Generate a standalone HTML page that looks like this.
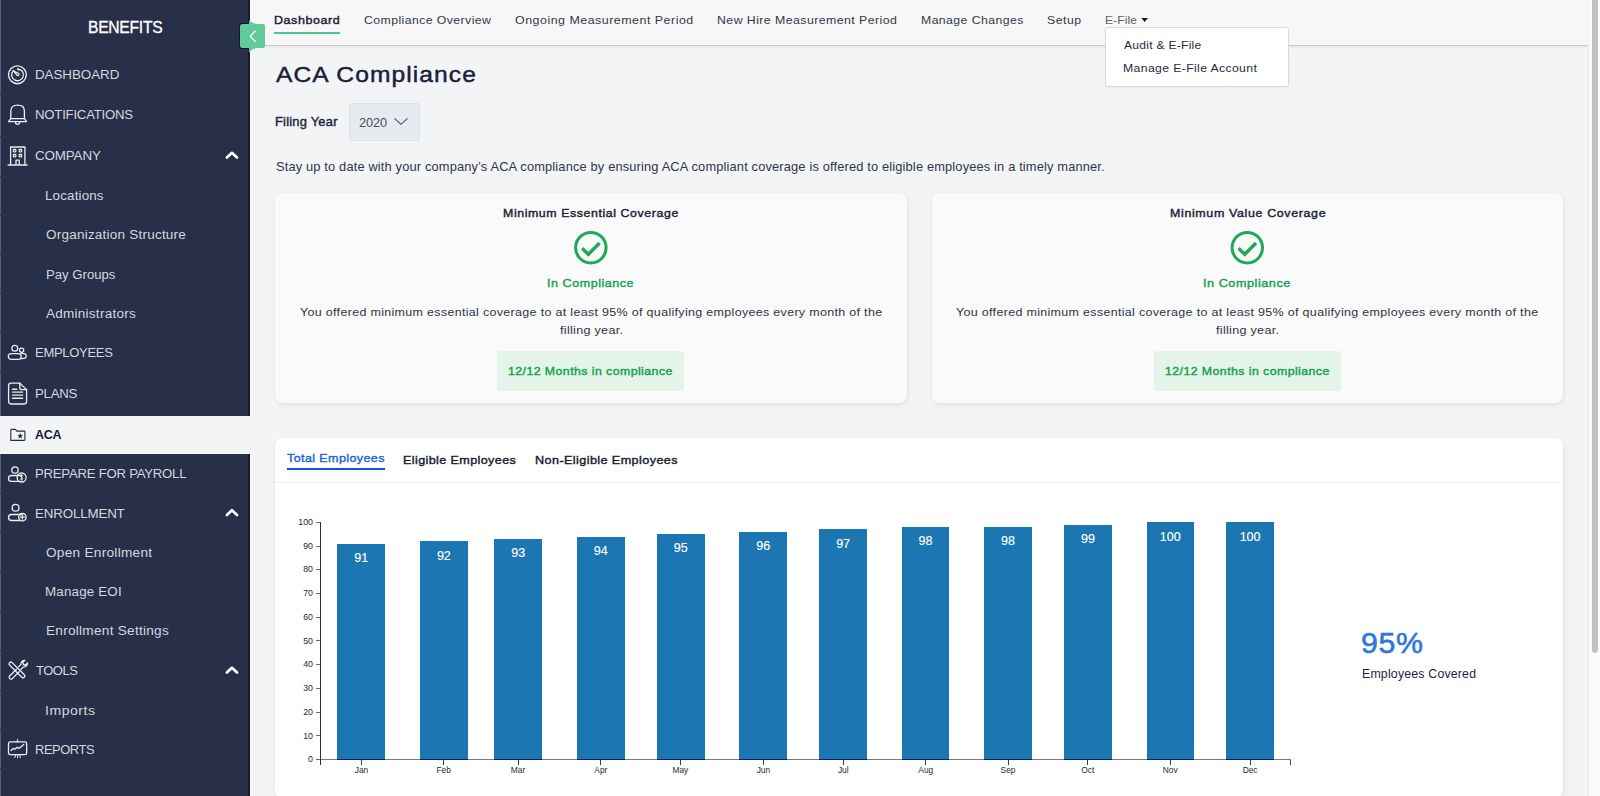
<!DOCTYPE html>
<html><head><meta charset="utf-8"><title>ACA Compliance</title>
<style>
html,body{margin:0;padding:0;}
body{width:1600px;height:796px;overflow:hidden;position:relative;background:#f3f4f6;font-family:"Liberation Sans", sans-serif;}
.t{position:absolute;white-space:pre;font-family:"Liberation Sans", sans-serif;}
.abs{position:absolute;}
#sb{position:absolute;left:0;top:0;width:248px;height:796px;background:#282f49;}
#sbr{position:absolute;left:248px;top:0;width:2px;height:796px;background:#171b2c;}
#sbl{position:absolute;left:0;top:0;width:1px;height:796px;background:#585e74;}
.sep{position:absolute;left:0;width:248px;height:1px;background:#333338;}
#aca{position:absolute;left:0;top:416px;width:250px;height:38px;background:#f3f4f6;}
#nav{position:absolute;left:250px;top:0;width:1338px;height:45px;background:#f7f7f7;border-bottom:1px solid #c9c9ca;box-shadow:0 1px 2px rgba(0,0,0,0.07);}
#navu{position:absolute;left:274px;top:32px;width:66px;height:2px;background:#4cc68f;}
#mainr{position:absolute;left:1588px;top:46px;width:1px;height:750px;background:#e9e9ea;}
#track{position:absolute;left:1589px;top:0;width:12px;height:796px;background:#fbfbfb;}
#thumb{position:absolute;left:1592px;top:0;width:6px;height:653px;background:#c2c2c2;border-radius:0 0 3px 3px;}
#dd{position:absolute;left:1105px;top:27px;width:182px;height:58px;background:#fff;border:1px solid #d9d9dc;border-radius:3px;box-shadow:0 1px 2px rgba(0,0,0,0.04);}
#sel{position:absolute;left:349px;top:103px;width:69px;height:36px;background:#e7eaee;border:1px solid #dae1e9;border-radius:3px;}
.card{position:absolute;top:193px;height:210px;background:#fafafa;border-radius:8px;box-shadow:1px 2px 5px rgba(20,30,50,0.09);}
.btn{position:absolute;top:351px;width:187px;height:40px;background:#e4f4e9;border-radius:3px;}
#cc{position:absolute;left:275px;top:438px;width:1288px;height:360px;background:#ffffff;border-radius:8px;box-shadow:1px 2px 5px rgba(20,30,50,0.09);}
#ccd{position:absolute;left:275px;top:482px;width:1288px;height:1px;background:#eceef1;}
#tabu{position:absolute;left:287px;top:467.8px;width:98px;height:2.2px;background:#0d55d9;}
.bar{position:absolute;background:#1c76b1;border-bottom:1px solid #0c1f6a;box-sizing:border-box;}
.yt{position:absolute;left:315.5px;width:5px;height:1px;background:#6a6a6a;}
.xt{position:absolute;top:759.6px;width:1px;height:5px;background:#3a3a3a;}
#yax{position:absolute;left:320px;top:522px;width:1px;height:242.5px;background:#2e2e2e;}
#xax{position:absolute;left:320px;top:759.1px;width:970.5px;height:1px;background:#7a7a7a;}
#xend{position:absolute;left:1289.5px;top:759.6px;width:1px;height:5px;background:#444;}
</style></head><body>
<div id="sb"></div><div id="sbl"></div><div id="sbr"></div>
<div class="sep" style="top:94px"></div>
<div class="sep" style="top:136px"></div>
<div class="sep" style="top:176px"></div>
<div class="sep" style="top:215px"></div>
<div class="sep" style="top:254px"></div>
<div class="sep" style="top:293px"></div>
<div class="sep" style="top:332px"></div>
<div class="sep" style="top:372px"></div>
<div class="sep" style="top:493px"></div>
<div class="sep" style="top:532px"></div>
<div class="sep" style="top:572px"></div>
<div class="sep" style="top:611px"></div>
<div class="sep" style="top:650px"></div>
<div class="sep" style="top:690px"></div>
<div class="sep" style="top:729px"></div>
<div class="sep" style="top:768px"></div>
<div id="aca"></div>
<div id="nav"></div>
<div id="navu"></div>
<div id="mainr"></div><div id="track"></div><div id="thumb"></div>
<div id="sel"></div>
<div class="card" style="left:275px;width:632px"></div>
<div class="card" style="left:932px;width:631px"></div>
<div class="btn" style="left:497px"></div>
<div class="btn" style="left:1154px"></div>
<div id="cc"></div><div id="ccd"></div><div id="tabu"></div>
<div id="xax"></div>
<div class="bar" style="left:337.40px;top:543.66px;width:47.8px;height:216.34px"></div>
<div class="bar" style="left:419.91px;top:541.28px;width:47.8px;height:218.72px"></div>
<div class="bar" style="left:494.44px;top:538.91px;width:47.8px;height:221.09px"></div>
<div class="bar" style="left:576.95px;top:536.54px;width:47.8px;height:223.46px"></div>
<div class="bar" style="left:656.80px;top:534.16px;width:47.8px;height:225.84px"></div>
<div class="bar" style="left:739.31px;top:531.79px;width:47.8px;height:228.21px"></div>
<div class="bar" style="left:819.16px;top:529.42px;width:47.8px;height:230.58px"></div>
<div class="bar" style="left:901.68px;top:527.05px;width:47.8px;height:232.95px"></div>
<div class="bar" style="left:984.19px;top:527.05px;width:47.8px;height:232.95px"></div>
<div class="bar" style="left:1064.04px;top:524.67px;width:47.8px;height:235.33px"></div>
<div class="bar" style="left:1146.55px;top:522.30px;width:47.8px;height:237.70px"></div>
<div class="bar" style="left:1226.40px;top:522.30px;width:47.8px;height:237.70px"></div>
<div class="yt" style="top:759.10px"></div>
<div class="yt" style="top:735.37px"></div>
<div class="yt" style="top:711.64px"></div>
<div class="yt" style="top:687.91px"></div>
<div class="yt" style="top:664.18px"></div>
<div class="yt" style="top:640.45px"></div>
<div class="yt" style="top:616.72px"></div>
<div class="yt" style="top:592.99px"></div>
<div class="yt" style="top:569.26px"></div>
<div class="yt" style="top:545.53px"></div>
<div class="yt" style="top:521.80px"></div>
<div class="xt" style="left:360.80px"></div>
<div class="xt" style="left:443.31px"></div>
<div class="xt" style="left:517.84px"></div>
<div class="xt" style="left:600.35px"></div>
<div class="xt" style="left:680.20px"></div>
<div class="xt" style="left:762.71px"></div>
<div class="xt" style="left:842.56px"></div>
<div class="xt" style="left:925.08px"></div>
<div class="xt" style="left:1007.59px"></div>
<div class="xt" style="left:1087.44px"></div>
<div class="xt" style="left:1169.95px"></div>
<div class="xt" style="left:1249.80px"></div>
<div id="yax"></div><div id="xend"></div>
<svg class="abs" style="left:0;top:0" width="1600" height="796" viewBox="0 0 1600 796">
<!-- toggle -->
<rect x="239" y="23" width="12" height="26" rx="3" fill="#120f28" opacity="0.85"/>
<path d="M249 20 Q251 23 257 24 L263 24 Q265 24 265 26 L265 46 Q265 48 263 48 L257 48 Q251 49 249 53 Z" fill="#61ca9b"/>
<rect x="240" y="24" width="14" height="24" rx="2.5" fill="#61ca9b"/>
<path d="M255.6 30.6 L250.2 36.2 L255.6 41.8" fill="none" stroke="#fff" stroke-width="1.3"/>
<!-- chevrons up -->
<g fill="none" stroke="#fff" stroke-width="2.7" stroke-linecap="round" stroke-linejoin="round">
<path d="M226.9 157.6 L231.95 152.8 L237 157.6"/>
<path d="M226.9 515.0 L231.95 510.2 L237 515.0"/>
<path d="M226.9 672.6 L231.95 667.8 L237 672.6"/>
</g>
<!-- E-File caret -->
<path d="M1141.3 18.1 L1148 18.1 L1144.65 21.9 Z" fill="#141933"/>
<!-- select chevron -->
<path d="M394.5 118.3 L401 124.3 L407.5 118.3" fill="none" stroke="#4b5060" stroke-width="1.1"/>
<!-- check icons -->
<g fill="none" stroke="#20a85a">
<circle cx="590.85" cy="247.7" r="15.25" stroke-width="3.0"/>
<path d="M582.1 248.3 L588.3 254.3 L599.6 243.0" stroke-width="3.4"/>
<circle cx="1247.3" cy="247.7" r="15.25" stroke-width="3.0"/>
<path d="M1238.55 248.3 L1244.75 254.3 L1256.05 243.0" stroke-width="3.4"/>
</g>
<!-- sidebar icons -->
<g fill="none" stroke="#eceef2" stroke-width="1.3" stroke-linecap="round" stroke-linejoin="round">
<!-- dashboard 4,60 -->
<g transform="translate(4,60)">
<circle cx="13.4" cy="14.8" r="8.9" stroke-width="1.4"/>
<path d="M13.6 8.9 A5.9 5.9 0 1 1 9.4 10.6" stroke-width="1.3"/>
<path d="M13.6 8.9 Q15.2 9.4 14.8 10.6" stroke-width="1.1"/>
<path d="M9.2 10.6 L13.3 15.5 A1.3 1.3 0 0 0 15 13.8 Z" stroke-width="1.2"/>
</g>
<!-- bell 4,100 -->
<g transform="translate(4,100)">
<path d="M6.8 18.6 L6.8 11 Q6.8 5.2 13.6 5.2 Q20.4 5.2 20.4 11 L20.4 18.6"/>
<path d="M6.8 18.6 L20.4 18.6 L22.6 21.6 L4.6 21.6 Z"/>
<path d="M11.5 22.2 A2.1 2.1 0 0 0 15.7 22.2"/>
</g>
<!-- building 4,142 -->
<g transform="translate(4,142)">
<path d="M6.6 22.3 L6.6 5 L20.9 5 L20.9 22.3"/>
<path d="M4.2 22.9 L23 22.9" stroke-width="1.5"/>
<rect x="9.4" y="7.4" width="2.4" height="2.4" rx="0.5"/>
<rect x="15.2" y="7.4" width="2.4" height="2.4" rx="0.5"/>
<rect x="9.4" y="12.4" width="2.4" height="2.4" rx="0.5"/>
<rect x="15.2" y="12.4" width="2.4" height="2.4" rx="0.5"/>
<path d="M12 22.3 L12 18.2 L15.2 18.2 L15.2 22.3"/>
</g>
<!-- employees 4,338 -->
<g transform="translate(4,338)">
<circle cx="10.8" cy="10.2" r="2.9"/>
<rect x="4.3" y="15.6" width="12.9" height="5.8" rx="2.9"/>
<circle cx="17.6" cy="12.3" r="2.1"/>
<path d="M16.9 15.4 L19.8 15.6 A2.4 2.4 0 0 1 19.8 20.4 L17.6 20.6"/>
</g>
<!-- plans 4,379 -->
<g transform="translate(4,379)">
<path d="M15.8 4.2 L7 4.2 Q4.6 4.2 4.6 6.6 L4.6 22.6 Q4.6 25 7 25 L20.2 25 Q22.6 25 22.6 22.6 L22.6 10.6 Z"/>
<path d="M15.8 4.2 L15.8 8.4 Q15.8 10.6 18 10.6 L22.6 10.6"/>
<path d="M8.5 10.2 L12.7 10.2 M8.5 13.1 L18.6 13.1 M8.5 16.1 L18.6 16.1 M8.5 19.2 L18.6 19.2" stroke-width="1.4"/>
</g>
<!-- prepare payroll 4,460 -->
<g transform="translate(4,460)">
<circle cx="11" cy="10" r="3.2"/>
<path d="M15.6 21.3 L7.4 21.3 A2.9 2.9 0 0 1 7.4 15.5 L17.8 15.5"/>
<circle cx="17.6" cy="17.5" r="4.5"/>
<path d="M18.8 15.8 Q17.6 15.2 16.8 16 Q16.4 17.1 17.7 17.6 Q19 18.1 18.4 19.2 Q17.6 19.8 16.5 19.2 M17.6 14.6 L17.6 20.4" stroke-width="0.9"/>
</g>
<!-- enrollment 4,499 -->
<g transform="translate(4,499)">
<circle cx="11.6" cy="8.8" r="3.4"/>
<path d="M15.6 21.5 L7.5 21.5 A3 3 0 0 1 7.5 15.5 L17.8 15.5"/>
<circle cx="18.4" cy="18.2" r="3.7"/>
<path d="M18.4 16.3 L18.4 20.1 M16.5 18.2 L20.3 18.2" stroke-width="1.2"/>
</g>
<!-- tools 4,657 -->
<g transform="translate(4,657)">
<path d="M5.6 8.1 A1.7 1.7 0 0 1 8.1 5.6 L20.8 18.3 A2.1 2.1 0 0 1 18.3 20.8 Z"/>
<path d="M16.8 12.5 L19.5 9.9 A3.6 3.6 0 0 0 23.5 6 L21.5 8 L19.4 7.5 L18.9 5.4 L20.9 3.4 A3.6 3.6 0 0 0 17 7.4 L14.5 9.9"/>
<path d="M12.5 12.2 L5.4 19.3 A1.9 1.9 0 0 0 8 21.9 L15.1 14.8"/>
</g>
<!-- reports 4,735 -->
<g transform="translate(4,735)">
<rect x="4.5" y="6.9" width="18.2" height="12.8" rx="1.8"/>
<path d="M13.5 6.9 L13.5 4.8"/>
<path d="M7.2 15.5 L9.2 13.4 L10.8 14.3 L13.2 12.2 L14.8 13.4 L19.8 9.4"/>
<path d="M13.6 19.8 L13.6 22.8 M11.6 19.8 L10.8 22.6 M15.6 19.8 L16.4 22.6" stroke-width="1.0"/>
</g>
</g>
<!-- ACA folder icon 4,421 dark -->
<g transform="translate(4,421)" fill="none" stroke="#232a44" stroke-width="1.1" stroke-linejoin="round">
<path d="M6.8 19.4 L6.8 9.3 Q6.8 8.4 7.7 8.4 L11.4 8.4 L12.9 10.1 L20.2 10.1 Q20.9 10.1 20.9 10.8 L20.9 18.8 Q20.9 19.4 20.2 19.4 Z"/>
<path d="M16.2 12.6 L16.8 14.3 L18.5 14.3 L17.2 15.4 L17.6 17.1 L16.2 16.1 L14.8 17.1 L15.2 15.4 L13.9 14.3 L15.6 14.3 Z" fill="#1c2340" stroke-width="0.5"/>
</g>
</svg>

<div id="dd"></div>
<span class="t" style="left:87.93px;top:19.19px;font-size:16.07px;line-height:16.07px;color:#ffffff;-webkit-text-stroke:0.32px #ffffff;letter-spacing:-0.283px;transform:scaleX(0.9748);transform-origin:0 0;">BENEFITS</span>
<span class="t" style="left:34.61px;top:68.06px;font-size:13.51px;line-height:13.51px;color:#d5d8df;letter-spacing:-0.072px;transform:scaleX(0.9932);transform-origin:0 0;">DASHBOARD</span>
<span class="t" style="left:34.93px;top:108.06px;font-size:13.51px;line-height:13.51px;color:#d5d8df;letter-spacing:-0.219px;transform:scaleX(0.9748);transform-origin:0 0;">NOTIFICATIONS</span>
<span class="t" style="left:34.81px;top:148.71px;font-size:13.51px;line-height:13.51px;color:#d5d8df;letter-spacing:-0.118px;transform:scaleX(0.9894);transform-origin:0 0;">COMPANY</span>
<span class="t" style="left:34.84px;top:345.56px;font-size:13.51px;line-height:13.51px;color:#d5d8df;letter-spacing:-0.345px;transform:scaleX(0.9673);transform-origin:0 0;">EMPLOYEES</span>
<span class="t" style="left:34.82px;top:387.06px;font-size:13.51px;line-height:13.51px;color:#d5d8df;letter-spacing:-0.230px;transform:scaleX(0.9789);transform-origin:0 0;">PLANS</span>
<span class="t" style="left:34.63px;top:467.11px;font-size:13.51px;line-height:13.51px;color:#d5d8df;letter-spacing:-0.235px;transform:scaleX(0.9740);transform-origin:0 0;">PREPARE FOR PAYROLL</span>
<span class="t" style="left:34.82px;top:506.51px;font-size:13.51px;line-height:13.51px;color:#d5d8df;letter-spacing:-0.141px;transform:scaleX(0.9863);transform-origin:0 0;">ENROLLMENT</span>
<span class="t" style="left:35.51px;top:663.81px;font-size:13.51px;line-height:13.51px;color:#d5d8df;letter-spacing:-0.475px;transform:scaleX(0.9592);transform-origin:0 0;">TOOLS</span>
<span class="t" style="left:34.75px;top:743.06px;font-size:13.51px;line-height:13.51px;color:#d5d8df;letter-spacing:-0.467px;transform:scaleX(0.9577);transform-origin:0 0;">REPORTS</span>
<span class="t" style="left:45.38px;top:188.82px;font-size:13.09px;line-height:13.09px;color:#d5d8df;letter-spacing:0.154px;transform:scaleX(1.0231);transform-origin:0 0;">Locations</span>
<span class="t" style="left:45.78px;top:228.22px;font-size:13.09px;line-height:13.09px;color:#d5d8df;letter-spacing:0.206px;transform:scaleX(1.0345);transform-origin:0 0;">Organization Structure</span>
<span class="t" style="left:45.50px;top:267.62px;font-size:13.09px;line-height:13.09px;color:#d5d8df;letter-spacing:0.019px;transform:scaleX(1.0026);transform-origin:0 0;">Pay Groups</span>
<span class="t" style="left:46.20px;top:306.72px;font-size:13.09px;line-height:13.09px;color:#d5d8df;letter-spacing:0.227px;transform:scaleX(1.0368);transform-origin:0 0;">Administrators</span>
<span class="t" style="left:45.58px;top:546.02px;font-size:13.09px;line-height:13.09px;color:#d5d8df;letter-spacing:0.272px;transform:scaleX(1.0407);transform-origin:0 0;">Open Enrollment</span>
<span class="t" style="left:45.18px;top:585.22px;font-size:13.09px;line-height:13.09px;color:#d5d8df;letter-spacing:0.172px;transform:scaleX(1.0222);transform-origin:0 0;">Manage EOI</span>
<span class="t" style="left:45.56px;top:624.42px;font-size:13.09px;line-height:13.09px;color:#d5d8df;letter-spacing:0.247px;transform:scaleX(1.0414);transform-origin:0 0;">Enrollment Settings</span>
<span class="t" style="left:44.81px;top:703.62px;font-size:13.09px;line-height:13.09px;color:#d5d8df;letter-spacing:0.482px;transform:scaleX(1.0740);transform-origin:0 0;">Imports</span>
<span class="t" style="left:35.41px;top:428.76px;font-size:12.80px;line-height:12.80px;color:#161b33;font-weight:700;letter-spacing:-0.304px;transform:scaleX(0.9781);transform-origin:0 0;">ACA</span>
<span class="t" style="left:274.22px;top:15.24px;font-size:11.52px;line-height:11.52px;color:#1b2036;-webkit-text-stroke:0.4px #1b2036;letter-spacing:0.533px;transform:scaleX(1.0844);transform-origin:0 0;">Dashboard</span>
<span class="t" style="left:363.97px;top:15.24px;font-size:11.52px;line-height:11.52px;color:#33384c;letter-spacing:0.387px;transform:scaleX(1.0666);transform-origin:0 0;">Compliance Overview</span>
<span class="t" style="left:515.16px;top:15.24px;font-size:11.52px;line-height:11.52px;color:#33384c;letter-spacing:0.454px;transform:scaleX(1.0803);transform-origin:0 0;">Ongoing Measurement Period</span>
<span class="t" style="left:717.04px;top:15.24px;font-size:11.52px;line-height:11.52px;color:#33384c;letter-spacing:0.400px;transform:scaleX(1.0715);transform-origin:0 0;">New Hire Measurement Period</span>
<span class="t" style="left:920.84px;top:15.24px;font-size:11.52px;line-height:11.52px;color:#33384c;letter-spacing:0.409px;transform:scaleX(1.0630);transform-origin:0 0;">Manage Changes</span>
<span class="t" style="left:1047.27px;top:15.24px;font-size:11.52px;line-height:11.52px;color:#33384c;letter-spacing:0.468px;transform:scaleX(1.0685);transform-origin:0 0;">Setup</span>
<span class="t" style="left:1105.07px;top:15.24px;font-size:11.52px;line-height:11.52px;color:#5a5f70;letter-spacing:0.176px;transform:scaleX(1.0317);transform-origin:0 0;">E-File</span>
<span class="t" style="left:1124.00px;top:40.44px;font-size:11.52px;line-height:11.52px;color:#262b3f;letter-spacing:0.250px;transform:scaleX(1.0488);transform-origin:0 0;">Audit &amp; E-File</span>
<span class="t" style="left:1123.04px;top:62.74px;font-size:11.52px;line-height:11.52px;color:#262b3f;letter-spacing:0.347px;transform:scaleX(1.0620);transform-origin:0 0;">Manage E-File Account</span>
<span class="t" style="left:275.80px;top:62.83px;font-size:22.76px;line-height:22.76px;color:#1a2038;-webkit-text-stroke:0.46px #1a2038;letter-spacing:0.995px;transform:scaleX(1.0812);transform-origin:0 0;">ACA Compliance</span>
<span class="t" style="left:274.96px;top:115.62px;font-size:12.38px;line-height:12.38px;color:#1e2438;-webkit-text-stroke:0.4px #1e2438;letter-spacing:0.221px;transform:scaleX(1.0405);transform-origin:0 0;">Filing Year</span>
<span class="t" style="left:358.70px;top:117.16px;font-size:12.80px;line-height:12.80px;color:#4b5060;letter-spacing:-0.043px;transform:scaleX(0.9953);transform-origin:0 0;">2020</span>
<span class="t" style="left:275.59px;top:161.20px;font-size:12.52px;line-height:12.52px;color:#30364a;letter-spacing:0.148px;transform:scaleX(1.0264);transform-origin:0 0;">Stay up to date with your company’s ACA compliance by ensuring ACA compliant coverage is offered to eligible employees in a timely manner.</span>
<span class="t" style="left:503.11px;top:207.59px;font-size:11.24px;line-height:11.24px;color:#1c2238;-webkit-text-stroke:0.4px #1c2238;letter-spacing:0.528px;transform:scaleX(1.1002);transform-origin:0 0;">Minimum Essential Coverage</span>
<span class="t" style="left:547.41px;top:277.99px;font-size:11.52px;line-height:11.52px;color:#12a24d;-webkit-text-stroke:0.4px #12a24d;letter-spacing:0.492px;transform:scaleX(1.0891);transform-origin:0 0;">In Compliance</span>
<span class="t" style="left:299.69px;top:306.60px;font-size:11.81px;line-height:11.81px;color:#2e3448;letter-spacing:0.299px;transform:scaleX(1.0583);transform-origin:0 0;">You offered minimum essential coverage to at least 95% of qualifying employees every month of the</span>
<span class="t" style="left:559.79px;top:325.30px;font-size:11.81px;line-height:11.81px;color:#2e3448;letter-spacing:0.280px;transform:scaleX(1.0654);transform-origin:0 0;">filling year.</span>
<span class="t" style="left:508.39px;top:366.16px;font-size:11.38px;line-height:11.38px;color:#12a24d;-webkit-text-stroke:0.4px #12a24d;letter-spacing:0.418px;transform:scaleX(1.0803);transform-origin:0 0;">12/12 Months in compliance</span>
<span class="t" style="left:1169.50px;top:207.59px;font-size:11.24px;line-height:11.24px;color:#1c2238;-webkit-text-stroke:0.4px #1c2238;letter-spacing:0.581px;transform:scaleX(1.1063);transform-origin:0 0;">Minimum Value Coverage</span>
<span class="t" style="left:1203.21px;top:277.99px;font-size:11.52px;line-height:11.52px;color:#12a24d;-webkit-text-stroke:0.4px #12a24d;letter-spacing:0.516px;transform:scaleX(1.0940);transform-origin:0 0;">In Compliance</span>
<span class="t" style="left:956.14px;top:306.60px;font-size:11.81px;line-height:11.81px;color:#2e3448;letter-spacing:0.299px;transform:scaleX(1.0583);transform-origin:0 0;">You offered minimum essential coverage to at least 95% of qualifying employees every month of the</span>
<span class="t" style="left:1216.24px;top:325.30px;font-size:11.81px;line-height:11.81px;color:#2e3448;letter-spacing:0.280px;transform:scaleX(1.0654);transform-origin:0 0;">filling year.</span>
<span class="t" style="left:1164.84px;top:366.16px;font-size:11.38px;line-height:11.38px;color:#12a24d;-webkit-text-stroke:0.4px #12a24d;letter-spacing:0.418px;transform:scaleX(1.0803);transform-origin:0 0;">12/12 Months in compliance</span>
<span class="t" style="left:287.39px;top:453.20px;font-size:11.81px;line-height:11.81px;color:#2064d4;-webkit-text-stroke:0.4px #2064d4;letter-spacing:0.366px;transform:scaleX(1.0633);transform-origin:0 0;">Total Employees</span>
<span class="t" style="left:403.29px;top:455.30px;font-size:11.81px;line-height:11.81px;color:#151a30;-webkit-text-stroke:0.4px #151a30;letter-spacing:0.360px;transform:scaleX(1.0664);transform-origin:0 0;">Eligible Employees</span>
<span class="t" style="left:534.54px;top:455.30px;font-size:11.81px;line-height:11.81px;color:#151a30;-webkit-text-stroke:0.4px #151a30;letter-spacing:0.384px;transform:scaleX(1.0695);transform-origin:0 0;">Non-Eligible Employees</span>
<span class="t" style="left:1361.18px;top:627.95px;font-size:29.59px;line-height:29.59px;color:#2d77de;-webkit-text-stroke:0.59px #2d77de;letter-spacing:0.671px;transform:scaleX(1.0242);transform-origin:0 0;">95%</span>
<span class="t" style="left:1362.37px;top:668.88px;font-size:11.95px;line-height:11.95px;color:#1e2545;letter-spacing:0.196px;transform:scaleX(1.0305);transform-origin:0 0;">Employees Covered</span>
<span class="t" style="left:308.10px;top:755.23px;font-size:8.82px;line-height:8.82px;color:#2a2a2a;">0</span>
<span class="t" style="left:303.20px;top:731.50px;font-size:8.82px;line-height:8.82px;color:#2a2a2a;">10</span>
<span class="t" style="left:303.20px;top:707.77px;font-size:8.82px;line-height:8.82px;color:#2a2a2a;">20</span>
<span class="t" style="left:303.20px;top:684.04px;font-size:8.82px;line-height:8.82px;color:#2a2a2a;">30</span>
<span class="t" style="left:303.20px;top:660.31px;font-size:8.82px;line-height:8.82px;color:#2a2a2a;">40</span>
<span class="t" style="left:303.20px;top:636.58px;font-size:8.82px;line-height:8.82px;color:#2a2a2a;">50</span>
<span class="t" style="left:303.20px;top:612.85px;font-size:8.82px;line-height:8.82px;color:#2a2a2a;">60</span>
<span class="t" style="left:303.20px;top:589.12px;font-size:8.82px;line-height:8.82px;color:#2a2a2a;">70</span>
<span class="t" style="left:303.20px;top:565.39px;font-size:8.82px;line-height:8.82px;color:#2a2a2a;">80</span>
<span class="t" style="left:303.20px;top:541.66px;font-size:8.82px;line-height:8.82px;color:#2a2a2a;">90</span>
<span class="t" style="left:298.29px;top:517.93px;font-size:8.82px;line-height:8.82px;color:#2a2a2a;">100</span>
<span class="t" style="left:354.72px;top:765.94px;font-size:8.39px;line-height:8.39px;color:#2a2a2a;">Jan</span>
<span class="t" style="left:436.42px;top:765.94px;font-size:8.39px;line-height:8.39px;color:#2a2a2a;">Feb</span>
<span class="t" style="left:510.86px;top:765.94px;font-size:8.39px;line-height:8.39px;color:#2a2a2a;">Mar</span>
<span class="t" style="left:594.37px;top:765.94px;font-size:8.39px;line-height:8.39px;color:#2a2a2a;">Apr</span>
<span class="t" style="left:672.47px;top:765.94px;font-size:8.39px;line-height:8.39px;color:#2a2a2a;">May</span>
<span class="t" style="left:756.63px;top:765.94px;font-size:8.39px;line-height:8.39px;color:#2a2a2a;">Jun</span>
<span class="t" style="left:837.88px;top:765.94px;font-size:8.39px;line-height:8.39px;color:#2a2a2a;">Jul</span>
<span class="t" style="left:918.34px;top:765.94px;font-size:8.39px;line-height:8.39px;color:#2a2a2a;">Aug</span>
<span class="t" style="left:1000.61px;top:765.94px;font-size:8.39px;line-height:8.39px;color:#2a2a2a;">Sep</span>
<span class="t" style="left:1081.28px;top:765.94px;font-size:8.39px;line-height:8.39px;color:#2a2a2a;">Oct</span>
<span class="t" style="left:1162.69px;top:765.94px;font-size:8.39px;line-height:8.39px;color:#2a2a2a;">Nov</span>
<span class="t" style="left:1242.64px;top:765.94px;font-size:8.39px;line-height:8.39px;color:#2a2a2a;">Dec</span>
<span class="t" style="left:354.37px;top:551.96px;font-size:12.52px;line-height:12.52px;color:#ffffff;-webkit-text-stroke:0.15px #ffffff;">91</span>
<span class="t" style="left:436.88px;top:549.59px;font-size:12.52px;line-height:12.52px;color:#ffffff;-webkit-text-stroke:0.15px #ffffff;">92</span>
<span class="t" style="left:511.36px;top:547.21px;font-size:12.52px;line-height:12.52px;color:#ffffff;-webkit-text-stroke:0.15px #ffffff;">93</span>
<span class="t" style="left:593.82px;top:544.84px;font-size:12.52px;line-height:12.52px;color:#ffffff;-webkit-text-stroke:0.15px #ffffff;">94</span>
<span class="t" style="left:673.72px;top:542.47px;font-size:12.52px;line-height:12.52px;color:#ffffff;-webkit-text-stroke:0.15px #ffffff;">95</span>
<span class="t" style="left:756.23px;top:540.09px;font-size:12.52px;line-height:12.52px;color:#ffffff;-webkit-text-stroke:0.15px #ffffff;">96</span>
<span class="t" style="left:836.13px;top:537.72px;font-size:12.52px;line-height:12.52px;color:#ffffff;-webkit-text-stroke:0.15px #ffffff;">97</span>
<span class="t" style="left:918.60px;top:535.35px;font-size:12.52px;line-height:12.52px;color:#ffffff;-webkit-text-stroke:0.15px #ffffff;">98</span>
<span class="t" style="left:1001.11px;top:535.35px;font-size:12.52px;line-height:12.52px;color:#ffffff;-webkit-text-stroke:0.15px #ffffff;">98</span>
<span class="t" style="left:1081.01px;top:532.97px;font-size:12.52px;line-height:12.52px;color:#ffffff;-webkit-text-stroke:0.15px #ffffff;">99</span>
<span class="t" style="left:1159.79px;top:530.60px;font-size:12.52px;line-height:12.52px;color:#ffffff;-webkit-text-stroke:0.15px #ffffff;">100</span>
<span class="t" style="left:1239.64px;top:530.60px;font-size:12.52px;line-height:12.52px;color:#ffffff;-webkit-text-stroke:0.15px #ffffff;">100</span>
</body></html>
